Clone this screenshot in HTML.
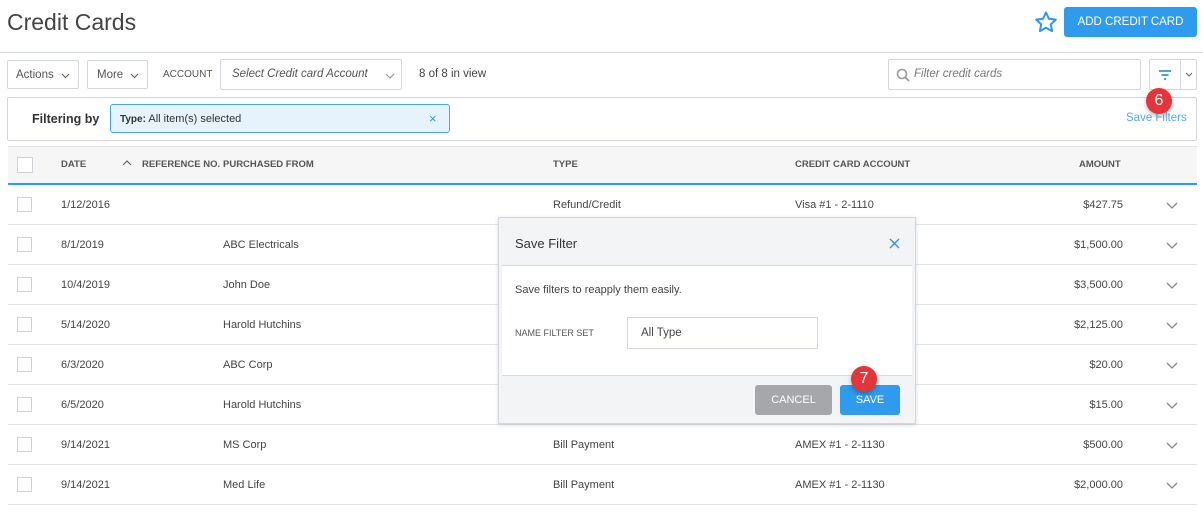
<!DOCTYPE html>
<html><head><style>
*{box-sizing:border-box;margin:0;padding:0}
body{width:1203px;height:520px;background:#fff;font-family:"Liberation Sans",Arial,sans-serif;color:#333;position:relative;overflow:hidden;font-size:12px}
.a{position:absolute}
.box{position:absolute;border:1px solid #d3d7dc;background:#fff;border-radius:2px}
.cb{position:absolute;left:17px;width:15px;height:15px;border:1px solid #cfd3d8;background:#fff}
.row{position:absolute;left:8px;width:1189px;height:40px;border-bottom:1px solid #e2e5e8}
.row span{position:absolute;top:14px;font-size:11px;color:#444}
.hd{position:absolute;top:159px;font-size:9.5px;font-weight:bold;color:#555}
.badge{position:absolute;width:26px;height:26px;border-radius:50%;background:#e3353a;color:#fff;font-size:16px;text-align:center;line-height:26px;box-shadow:0 2px 4px rgba(0,0,0,.3)}
.chev{position:absolute;left:1166px}
</style></head><body>
<div class="a" style="left:7px;top:9px;font-size:23px;color:#444">Credit Cards</div>
<svg class="a" style="left:1034px;top:11px" width="24" height="22" viewBox="0 0 24 22"><path d="M12 1.5l3 6.3 6.8.8-5 4.7 1.3 6.8L12 16.8l-6.1 3.3 1.3-6.8-5-4.7 6.8-.8z" fill="none" stroke="#2b96ea" stroke-width="2" stroke-linejoin="round"/></svg>
<div class="a" style="left:1064px;top:7px;width:133px;height:30px;background:#2f9bec;border-radius:3px;color:#fff;font-size:11.5px;text-align:center;line-height:30px">ADD CREDIT CARD</div>
<div class="a" style="left:0;top:52px;width:1203px;height:1px;background:#d8dce0"></div>

<div class="box" style="left:7px;top:60px;width:72px;height:29px"><span class="a" style="left:8px;top:8px;font-size:11.5px;color:#555">Actions</span><svg class="a" style="left:53px;top:12px" width="9" height="6"><path d="M1 1l3.5 3.5L8 1" fill="none" stroke="#666" stroke-width="1.2"/></svg></div>
<div class="box" style="left:87px;top:60px;width:61px;height:29px"><span class="a" style="left:9px;top:8px;font-size:11.5px;color:#555">More</span><svg class="a" style="left:42px;top:12px" width="9" height="6"><path d="M1 1l3.5 3.5L8 1" fill="none" stroke="#666" stroke-width="1.2"/></svg></div>
<div class="a" style="left:163px;top:69px;font-size:10px;color:#555">ACCOUNT</div>
<div class="box" style="left:220px;top:59px;width:182px;height:31px"><span class="a" style="left:11px;top:8px;font-size:11.5px;font-style:italic;color:#555">Select Credit card Account</span><svg class="a" style="left:164px;top:13px" width="10" height="6"><path d="M1 1l4 4 4-4" fill="none" stroke="#999" stroke-width="1.2"/></svg></div>
<div class="a" style="left:419px;top:68px;font-size:11.5px;color:#444">8 of 8 in view</div>
<div class="box" style="left:888px;top:59px;width:253px;height:31px"><svg class="a" style="left:7px;top:8px" width="14" height="14"><circle cx="6" cy="6" r="4.5" fill="none" stroke="#999" stroke-width="1.6"/><path d="M9.5 9.5l3.5 3.5" stroke="#999" stroke-width="1.8"/></svg><span class="a" style="left:25px;top:8px;font-size:11.5px;font-style:italic;color:#777">Filter credit cards</span></div>
<div class="box" style="left:1149px;top:59px;width:48px;height:31px"><div class="a" style="left:30px;top:0;width:1px;height:29px;background:#d3d7dc"></div><svg class="a" style="left:8px;top:9px" width="14" height="12"><path d="M1 2h12M3.5 6h7M6 10h2" stroke="#2b96ea" stroke-width="1.8"/></svg><svg class="a" style="left:35px;top:12px" width="8" height="5"><path d="M1 1l3 3 3-3" fill="none" stroke="#666" stroke-width="1.1"/></svg></div>

<div class="box" style="left:7px;top:97px;width:1190px;height:44px"></div>
<div class="a" style="left:32px;top:112px;font-size:12.5px;font-weight:bold;color:#333">Filtering by</div>
<div class="a" style="left:110px;top:104px;width:340px;height:29px;background:#e6f2fc;border:1px solid #4da3ea;border-radius:3px"><span class="a" style="left:9px;top:8px;font-size:11px;color:#333"><b style="font-size:10px">Type:</b> All item(s) selected</span><span class="a" style="left:318px;top:6px;color:#2b96ea;font-size:13px">×</span></div>
<div class="a" style="left:1126px;top:112px;font-size:11.5px;color:#5aa8ee">Save Filters</div>
<div class="badge" style="left:1146px;top:88px">6</div>

<div class="a" style="left:8px;top:146px;width:1189px;height:39px;background:#f6f6f7;border-top:1px solid #e2e5e8;border-bottom:2px solid #2f9bec"></div>
<div class="cb" style="top:157px;width:16px;height:16px"></div>
<div class="hd" style="left:61px">DATE</div>
<svg class="a" style="left:122px;top:160px" width="10" height="6"><path d="M1 5l4-4 4 4" fill="none" stroke="#666" stroke-width="1.2"/></svg>
<div class="hd" style="left:142px">REFERENCE NO.</div>
<div class="hd" style="left:223px">PURCHASED FROM</div>
<div class="hd" style="left:553px">TYPE</div>
<div class="hd" style="left:795px">CREDIT CARD ACCOUNT</div>
<div class="hd" style="left:1079px">AMOUNT</div>

<div class="row" style="top:185px"><span style="left:53px">1/12/2016</span><span style="left:545px">Refund/Credit</span><span style="left:787px">Visa #1 - 2-1110</span><span style="right:74px">$427.75</span></div>
<div class="row" style="top:225px"><span style="left:53px">8/1/2019</span><span style="left:215px">ABC Electricals</span><span style="right:74px">$1,500.00</span></div>
<div class="row" style="top:265px"><span style="left:53px">10/4/2019</span><span style="left:215px">John Doe</span><span style="right:74px">$3,500.00</span></div>
<div class="row" style="top:305px"><span style="left:53px">5/14/2020</span><span style="left:215px">Harold Hutchins</span><span style="right:74px">$2,125.00</span></div>
<div class="row" style="top:345px"><span style="left:53px">6/3/2020</span><span style="left:215px">ABC Corp</span><span style="right:74px">$20.00</span></div>
<div class="row" style="top:385px"><span style="left:53px">6/5/2020</span><span style="left:215px">Harold Hutchins</span><span style="right:74px">$15.00</span></div>
<div class="row" style="top:425px"><span style="left:53px">9/14/2021</span><span style="left:215px">MS Corp</span><span style="left:545px">Bill Payment</span><span style="left:787px">AMEX #1 - 2-1130</span><span style="right:74px">$500.00</span></div>
<div class="row" style="top:465px"><span style="left:53px">9/14/2021</span><span style="left:215px">Med Life</span><span style="left:545px">Bill Payment</span><span style="left:787px">AMEX #1 - 2-1130</span><span style="right:74px">$2,000.00</span></div>
<div class="cb" style="top:197px"></div><div class="cb" style="top:237px"></div><div class="cb" style="top:277px"></div><div class="cb" style="top:317px"></div><div class="cb" style="top:357px"></div><div class="cb" style="top:397px"></div><div class="cb" style="top:437px"></div><div class="cb" style="top:477px"></div>
<svg class="chev" style="top:202px" width="12" height="7"><path d="M1 1l5 5 5-5" fill="none" stroke="#888" stroke-width="1.3"/></svg>
<svg class="chev" style="top:242px" width="12" height="7"><path d="M1 1l5 5 5-5" fill="none" stroke="#888" stroke-width="1.3"/></svg>
<svg class="chev" style="top:282px" width="12" height="7"><path d="M1 1l5 5 5-5" fill="none" stroke="#888" stroke-width="1.3"/></svg>
<svg class="chev" style="top:322px" width="12" height="7"><path d="M1 1l5 5 5-5" fill="none" stroke="#888" stroke-width="1.3"/></svg>
<svg class="chev" style="top:362px" width="12" height="7"><path d="M1 1l5 5 5-5" fill="none" stroke="#888" stroke-width="1.3"/></svg>
<svg class="chev" style="top:402px" width="12" height="7"><path d="M1 1l5 5 5-5" fill="none" stroke="#888" stroke-width="1.3"/></svg>
<svg class="chev" style="top:442px" width="12" height="7"><path d="M1 1l5 5 5-5" fill="none" stroke="#888" stroke-width="1.3"/></svg>
<svg class="chev" style="top:482px" width="12" height="7"><path d="M1 1l5 5 5-5" fill="none" stroke="#888" stroke-width="1.3"/></svg>

<div class="a" style="left:498px;top:217px;width:418px;height:207px;background:#f3f4f5;border:1px solid #d3d7dc;box-shadow:0 1px 4px rgba(0,0,0,.15)">
 <div class="a" style="left:16px;top:18px;font-size:13px;color:#333">Save Filter</div>
 <svg class="a" style="left:390px;top:20px" width="11" height="11"><path d="M1 1l9 9M10 1l-9 9" stroke="#2b96ea" stroke-width="1.4"/></svg>
 <div class="a" style="left:3px;top:47px;width:410px;height:111px;background:#fff;border-top:1px solid #d8dce0;border-bottom:1px solid #d8dce0"></div>
 <div class="a" style="left:16px;top:66px;font-size:11px;color:#444">Save filters to reapply them easily.</div>
 <div class="a" style="left:16px;top:110px;font-size:9px;color:#555">NAME FILTER SET</div>
 <div class="a" style="left:128px;top:99px;width:191px;height:32px;border:1px solid #d3d7dc;background:#fff"><span class="a" style="left:13px;top:9px;font-size:11.5px;color:#444">All Type</span></div>
 <div class="a" style="left:256px;top:167px;width:77px;height:30px;background:#a5a7aa;border-radius:3px;color:#fff;font-size:11px;text-align:center;line-height:30px">CANCEL</div>
 <div class="a" style="left:341px;top:167px;width:60px;height:30px;background:#2f9bec;border-radius:3px;color:#fff;font-size:11px;text-align:center;line-height:30px">SAVE</div>
</div>
<div class="badge" style="left:851px;top:366px">7</div>
</body></html>
